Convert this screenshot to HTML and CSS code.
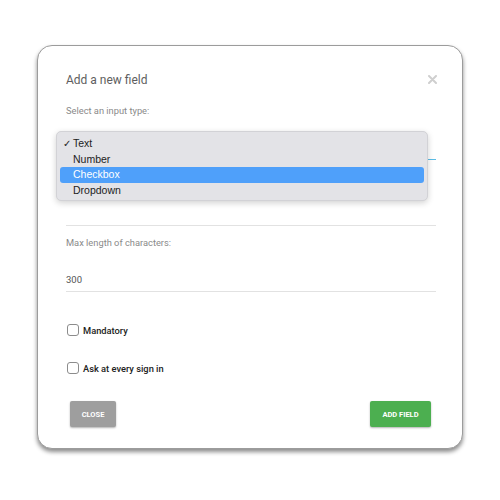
FILE: index.html
```html
<!DOCTYPE html>
<html>
<head>
<meta charset="utf-8">
<link rel="stylesheet" href="styles.css">
</head>
<body>
<div class="card">
  <div class="header">
    <span class="title">Add a new field</span>
    <svg class="close-x" width="9" height="9" viewBox="0 0 9 9"><path d="M1 1L8 8M8 1L1 8" stroke="#cfcfcf" stroke-width="2" stroke-linecap="round"/></svg>
  </div>
  <div class="label first">Select an input type:</div>
  <div class="field select-field"></div>
  <div class="field hidden-field"></div>
  <div class="label second">Max length of characters:</div>
  <div class="field input-field"><span class="value">300</span></div>
  <label class="check mandatory"><span class="box"></span><span>Mandatory</span></label>
  <label class="check ask"><span class="box"></span><span>Ask at every sign in</span></label>
  <div class="footer">
    <button class="btn btn-close">CLOSE</button>
    <button class="btn btn-add">ADD FIELD</button>
  </div>
  <div class="menu">
    <div class="item"><span class="tick">✓</span>Text</div>
    <div class="item">Number</div>
    <div class="item active">Checkbox</div>
    <div class="item">Dropdown</div>
  </div>
</div>
</body>
</html>
```
FILE: styles.css
```css
* { box-sizing: border-box; }
html, body { margin: 0; background: #fff; }
body {
  padding: 45px 37px;
  font-family: Roboto, "Liberation Sans", sans-serif;
}
.card {
  position: relative;
  width: 426px;
  border: 1px solid #9c9c9c;
  border-radius: 15px;
  background: #fff;
  box-shadow: 0 3px 4px rgba(0,0,0,0.45);
  padding: 25px 26px 21px 28px;
}
.header {
  height: 16px;
  display: flex;
  align-items: center;
  justify-content: space-between;
}
.title {
  font-size: 12px;
  line-height: 16px;
  color: #5e5e5e;
  padding-top: 1px;
}
.close-x { margin-right: -1px; margin-top: 1px; }
.label {
  font-size: 9.3px;
  line-height: 12px;
  color: #8a8a8a;
}
.label.first { margin-top: 18px; }
.label.second { margin-top: 11px; }
.field { border-bottom: 1px solid #e2e2e2; }
.select-field { height: 43px; border-bottom-color: #5cbde6; }
.hidden-field { height: 66px; }
.input-field {
  height: 43px;
  display: flex;
  align-items: flex-end;
  padding-bottom: 5px;
}
.value {
  font-size: 9.5px;
  line-height: 12px;
  color: #555;
}
.check {
  display: flex;
  align-items: center;
  height: 12px;
  font-size: 9.3px;
  font-weight: 500;
  color: #222;
}
.check.mandatory { margin-top: 32px; }
.check.ask { margin-top: 26px; }
.box {
  width: 12px;
  height: 12px;
  border: 1px solid #8c8c8c;
  border-radius: 3px;
  background: #fff;
  margin-right: 4px;
  margin-left: 1px;
}
.footer {
  margin-top: 27px;
  display: flex;
  justify-content: space-between;
  padding: 0 5px 0 4px;
}
.btn {
  height: 26px;
  border: none;
  border-radius: 2px;
  color: #fff;
  font-family: Roboto, "Liberation Sans", sans-serif;
  font-size: 7.5px;
  font-weight: 700;
  box-shadow: 0 1px 2px rgba(0,0,0,0.3);
  padding: 0;
}
.btn-close { width: 46px; background: #9e9e9e; }
.btn-add { width: 61px; background: #4caf50; }
.menu {
  position: absolute;
  left: 18px;
  top: 85px;
  width: 372px;
  height: 70px;
  background: #e3e3e7;
  border: 1px solid #d2d2d6;
  border-radius: 5px;
  box-shadow: 0 2px 6px rgba(0,0,0,0.18);
  padding: 4px 3px;
  font-family: "Liberation Sans", Arial, sans-serif;
  font-size: 10.5px;
  color: #222;
}
.item {
  position: relative;
  height: 15.5px;
  line-height: 15.5px;
  padding-left: 13px;
  border-radius: 3px;
}
.item.active { background: #4fa0fa; color: #fff; }
.tick {
  position: absolute;
  left: 3px;
  top: 0;
  font-size: 10px;
}
```
